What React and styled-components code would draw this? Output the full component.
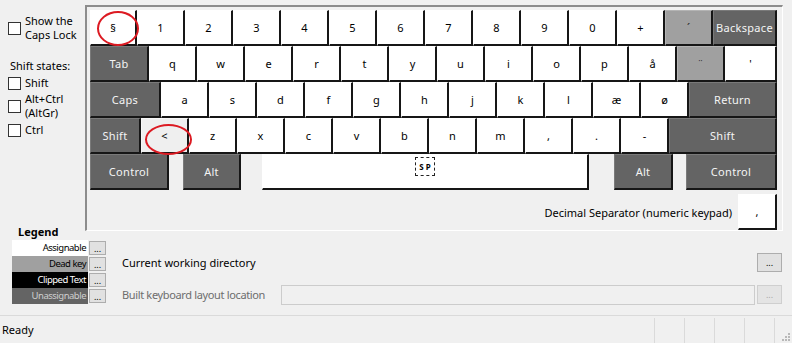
import React from "react";
import styled, { createGlobalStyle, css } from "styled-components";

const GlobalStyle = createGlobalStyle`
  body {
    margin: 0;
    background: #f0f0f0;
  }
`;

const Window = styled.div`
  width: 792px;
  height: 343px;
  display: flex;
  flex-direction: column;
  background: #f0f0f0;
  font-family: "Noto Sans", "Liberation Sans", sans-serif;
  font-size: 11px;
  color: #000;
  overflow: hidden;
`;

const TopArea = styled.div`
  display: flex;
  height: 231px;
`;

const Sidebar = styled.div`
  width: 85px;
  box-sizing: border-box;
  padding: 14px 0 0 8px;
  display: flex;
  flex-direction: column;
`;

const CheckRow = styled.label`
  display: flex;
  align-items: center;
  gap: 4px;
  line-height: 14px;
  margin-top: ${(p) => p.$mt || 0}px;
`;

const CheckBox = styled.span`
  flex: none;
  width: 11px;
  height: 11px;
  border: 1px solid #333;
  background: #fff;
`;

const SideTitle = styled.div`
  margin: 17px 0 0 2px;
  line-height: 14px;
`;

const KeyboardPanel = styled.div`
  flex: 1;
  margin: 5px 9px 0 0;
  box-sizing: border-box;
  border-top: 2px solid #8c8c8c;
  border-left: 2px solid #8c8c8c;
  border-right: 1px solid #fff;
  border-bottom: 1px solid #fff;
  padding: 3px 5px 0 3px;
  display: flex;
  flex-direction: column;
`;

const KeyRow = styled.div`
  display: flex;
  height: 36px;
`;

const keyColors = {
  normal: { bg: "#fff", fg: "#000", hi: "#fff" },
  empty: { bg: "#efefef", fg: "#000", hi: "#f7f7f7" },
  dead: { bg: "#a0a0a0", fg: "#2a2a2a", hi: "#b4b4b4" },
  fixed: { bg: "#646464", fg: "#f4f4f4", hi: "#7a7a7a" },
};

const Key = styled.div`
  position: relative;
  flex: none;
  box-sizing: border-box;
  width: ${(p) => p.$w}px;
  height: 36px;
  margin-left: ${(p) => p.$ml || 0}px;
  display: flex;
  align-items: center;
  justify-content: center;
  background: ${(p) => keyColors[p.$t].bg};
  color: ${(p) => keyColors[p.$t].fg};
  border-top: 1px solid ${(p) => keyColors[p.$t].hi};
  border-left: 1px solid ${(p) => keyColors[p.$t].hi};
  border-right: 2px solid #161616;
  border-bottom: 2px solid #161616;
  font-size: 11px;
  letter-spacing: ${(p) => (p.$t === "fixed" ? 0.3 : 0)}px;
  ${(p) =>
    p.$ring &&
    css`
      &::after {
        content: "";
        position: absolute;
        z-index: 2;
        left: ${p.$ring[0]}px;
        top: ${p.$ring[1]}px;
        width: ${p.$ring[2]}px;
        height: ${p.$ring[3]}px;
        box-sizing: border-box;
        border: 2px solid #dc1a22;
        border-radius: 50%;
      }
    `}
`;

const SpaceKey = styled(Key)`
  align-items: flex-start;
  padding-top: 2px;
`;

const FocusMark = styled.span`
  width: 20px;
  height: 19px;
  box-sizing: border-box;
  border: 1px dashed #222;
  display: flex;
  align-items: center;
  justify-content: center;
  font-size: 8px;
  font-weight: bold;
  letter-spacing: 2px;
  padding-left: 2px;
`;

const DecimalRow = styled.div`
  display: flex;
  justify-content: flex-end;
  align-items: center;
  gap: 6px;
  margin-top: 4px;
  height: 36px;
`;

const BottomArea = styled.div`
  display: flex;
  margin-top: -8px;
  padding: 0 10px 0 12px;
`;

const Legend = styled.div`
  width: 94px;
  display: flex;
  flex-direction: column;
`;

const LegendTitle = styled.div`
  font-weight: bold;
  line-height: 17px;
  padding-left: 6px;
`;

const LegendRow = styled.div`
  display: flex;
  align-items: center;
  height: 16px;
`;

const legendColors = {
  assignable: ["#fff", "#000"],
  dead: ["#a0a0a0", "#000"],
  clipped: ["#000", "#fff"],
  unassignable: ["#646464", "#cfcfcf"],
};

const Swatch = styled.div`
  width: 76px;
  height: 16px;
  box-sizing: border-box;
  padding-right: 2px;
  text-align: right;
  line-height: 16px;
  font-size: 9.5px;
  letter-spacing: -0.5px;
  background: ${(p) => legendColors[p.$kind][0]};
  color: ${(p) => legendColors[p.$kind][1]};
`;

const DotsButton = styled.div`
  flex: none;
  box-sizing: border-box;
  width: ${(p) => p.$w || 17}px;
  height: ${(p) => p.$h || 14}px;
  margin-left: ${(p) => p.$ml || 1}px;
  border: 1px solid ${(p) => (p.$disabled ? "#cfcfcf" : "#adadad")};
  background: ${(p) => (p.$disabled ? "#e4e4e4" : "#e1e1e1")};
  color: ${(p) => (p.$disabled ? "#a8a8a8" : "#000")};
  font-size: 9px;
  line-height: 9px;
  display: flex;
  align-items: center;
  justify-content: center;
`;

const PathArea = styled.div`
  flex: 1;
  margin-left: 16px;
  padding-top: 30px;
  display: flex;
  flex-direction: column;
`;

const PathRow = styled.div`
  display: flex;
  align-items: center;
  height: 19px;
  margin-top: ${(p) => p.$mt || 0}px;
`;

const PathLabel = styled.div`
  flex: ${(p) => (p.$fixed ? "none" : 1)};
  width: ${(p) => (p.$fixed ? "159px" : "auto")};
  color: ${(p) => (p.$muted ? "#6d6d6d" : "#000")};
  letter-spacing: ${(p) => (p.$muted ? -0.35 : 0)}px;
`;

const PathInput = styled.div`
  flex: 1;
  height: 20px;
  box-sizing: border-box;
  border: 1px solid #cccccc;
  background: #f0f0f0;
`;

const StatusBar = styled.div`
  margin-top: auto;
  height: 28px;
  box-sizing: border-box;
  border-top: 1px solid #dadada;
  display: flex;
`;

const StatusText = styled.div`
  flex: 1;
  padding-left: 2px;
  line-height: 27px;
`;

const StatusCell = styled.div`
  width: ${(p) => p.$w || 30}px;
  box-sizing: border-box;
  border-left: 1px solid #dadada;
  margin-top: 2px;
  display: flex;
  align-items: flex-end;
  justify-content: flex-end;
`;

const k = (l, w = 48, t = "normal", extra = {}) => ({ l, w, t, ...extra });

const rows = [
  [
    k("§", 47, "normal", { ring: [6, 0, 42, 35] }),
    k("1"), k("2"), k("3"), k("4"), k("5"), k("6"), k("7"), k("8"), k("9"), k("0"), k("+"),
    k("´", 48, "dead"),
    k("Backspace", 64, "fixed"),
  ],
  [
    k("Tab", 59, "fixed"),
    k("q"), k("w"), k("e"), k("r"), k("t"), k("y"), k("u"), k("i"), k("o"), k("p"), k("å"),
    k("¨", 48, "dead"),
    k("'", 52),
  ],
  [
    k("Caps", 71, "fixed"),
    k("a"), k("s"), k("d"), k("f"), k("g"), k("h"), k("j"), k("k"), k("l"), k("æ"), k("ø"),
    k("Return", 88, "fixed"),
  ],
  [
    k("Shift", 51, "fixed"),
    k("<", 48, "empty", { ring: [3, 5, 47, 31] }),
    k("z"), k("x"), k("c"), k("v"), k("b"), k("n"), k("m"), k(","), k("."), k("-"),
    k("Shift", 108, "fixed"),
  ],
];

const legend = [
  ["assignable", "Assignable"],
  ["dead", "Dead key"],
  ["clipped", "Clipped Text"],
  ["unassignable", "Unassignable"],
];

const Grip = () => (
  <svg width="8" height="8" viewBox="0 0 8 8" style={{ margin: "0 2px 2px 0" }}>
    {[
      [6, 0], [6, 3], [3, 3], [6, 6], [3, 6], [0, 6],
    ].map(([x, y]) => (
      <rect key={`${x}-${y}`} x={x} y={y} width="2" height="2" fill="#b8b8b8" />
    ))}
  </svg>
);

export default function App() {
  return (
    <Window>
      <GlobalStyle />
      <TopArea>
        <Sidebar>
          <CheckRow>
            <CheckBox />
            <span>
              Show the
              <br />
              Caps Lock
            </span>
          </CheckRow>
          <SideTitle>Shift states:</SideTitle>
          <CheckRow $mt={3}>
            <CheckBox />
            Shift
          </CheckRow>
          <CheckRow $mt={2}>
            <CheckBox />
            <span>
              Alt+Ctrl
              <br />
              (AltGr)
            </span>
          </CheckRow>
          <CheckRow $mt={3}>
            <CheckBox />
            Ctrl
          </CheckRow>
        </Sidebar>

        <KeyboardPanel>
          {rows.map((row, i) => (
            <KeyRow key={i}>
              {row.map((key, j) => (
                <Key key={j} $w={key.w} $t={key.t} $ring={key.ring}>
                  {key.l}
                </Key>
              ))}
            </KeyRow>
          ))}
          <KeyRow>
            <Key $w={79} $t="fixed">Control</Key>
            <Key $w={58} $t="fixed" $ml={14}>Alt</Key>
            <SpaceKey $w={327} $t="normal" $ml={21}>
              <FocusMark>SP</FocusMark>
            </SpaceKey>
            <Key $w={59} $t="fixed" $ml={25}>Alt</Key>
            <Key $w={91} $t="fixed" $ml={13}>Control</Key>
          </KeyRow>
          <DecimalRow>
            <span>Decimal Separator (numeric keypad)</span>
            <Key $w={39} $t="normal">,</Key>
          </DecimalRow>
        </KeyboardPanel>
      </TopArea>

      <BottomArea>
        <Legend>
          <LegendTitle>Legend</LegendTitle>
          {legend.map(([kind, text]) => (
            <LegendRow key={kind}>
              <Swatch $kind={kind}>{text}</Swatch>
              <DotsButton>...</DotsButton>
            </LegendRow>
          ))}
        </Legend>
        <PathArea>
          <PathRow>
            <PathLabel>Current working directory</PathLabel>
            <DotsButton $w={25} $h={19}>...</DotsButton>
          </PathRow>
          <PathRow $mt={13}>
            <PathLabel $fixed $muted>Built keyboard layout location</PathLabel>
            <PathInput />
            <DotsButton $w={25} $h={19} $ml={2} $disabled>...</DotsButton>
          </PathRow>
        </PathArea>
      </BottomArea>

      <StatusBar>
        <StatusText>Ready</StatusText>
        <StatusCell />
        <StatusCell />
        <StatusCell />
        <StatusCell />
        <StatusCell $w={18}>
          <Grip />
        </StatusCell>
      </StatusBar>
    </Window>
  );
}
